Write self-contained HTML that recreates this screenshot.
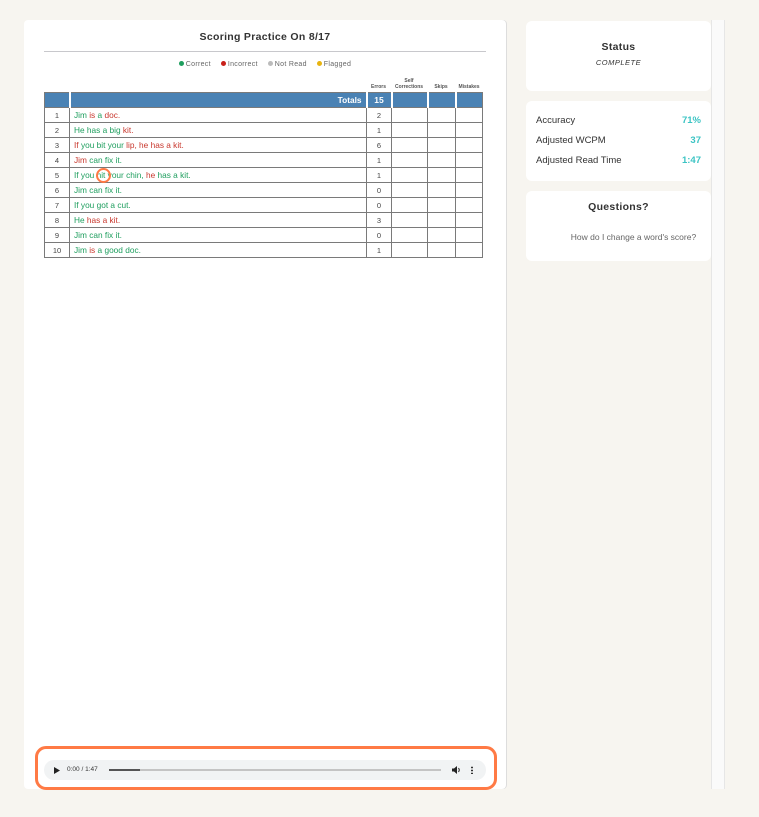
<!DOCTYPE html>
<html><head><meta charset="utf-8"><style>
*{margin:0;padding:0;box-sizing:border-box}
body{width:759px;height:817px;background:#f7f5f0;font-family:"Liberation Sans",sans-serif;position:relative;overflow:hidden;color:#333}
.card{position:absolute;background:#fff;border-radius:6px}
.main{left:24px;top:20px;width:482px;height:769px;border-radius:4px;box-shadow:1px 0 0 #ddd}
.title{position:absolute;left:0;width:482px;top:11px;text-align:center;font-weight:bold;font-size:10.5px;letter-spacing:.3px;color:#333}
.hr{position:absolute;left:20px;top:31px;width:442px;height:1px;background:#c8c8cc}
.legend{position:absolute;top:41px;left:0;width:482px;font-size:7px;color:#666;text-align:center;letter-spacing:.3px}
.legend span{margin:0 5px}
.legend i{display:inline-block;width:5px;height:5px;border-radius:50%;margin-right:2px;vertical-align:0}
.ch{position:absolute;font-size:5px;font-weight:bold;color:#555;text-align:center;line-height:6px}
table{position:absolute;left:20px;top:72px;border-collapse:collapse;table-layout:fixed;width:438px}
td{border:1px solid #7a7a7a;height:15px;font-size:8.3px;padding:0 4px;white-space:nowrap}
td.n{text-align:center;color:#444;font-size:7.5px}
tr.h td{background:#4a82b4;color:#fff;font-weight:bold;border-left:2px solid #fff;border-right:2px solid #fff;border-top:1px solid #7a7a7a;border-bottom:1px solid #7a7a7a}
tr.h td:first-child{border-left:1px solid #7a7a7a}
tr.h td:last-child{border-right:1px solid #7a7a7a}
.g{color:#1e9e5e}.r{color:#c8372d}
.side{left:526px;width:185px}
.strip{position:absolute;left:711px;top:20px;width:14px;height:769px;background:#fafafa;border-left:1px solid #e6e6e6;border-right:1px solid #e6e6e6}
.st{display:flex;justify-content:space-between;font-size:9.5px;color:#333;margin:0 10px;height:20px;align-items:center}
.st b{color:#3cc4c4}
.audio{position:absolute;left:11px;top:726px;width:462px;height:44px;border:3px solid #ff7a45;border-radius:11px}
.pill{position:absolute;left:6px;top:11px;width:442px;height:20px;border-radius:10px;background:#f1f3f4}
</style></head><body>
<div class="card main">
<div class="title">Scoring Practice On 8/17</div>
<div class="hr"></div>
<div class="legend"><span><i style="background:#1e9e5e"></i>Correct</span><span><i style="background:#c8201a"></i>Incorrect</span><span><i style="background:#bbb"></i>Not Read</span><span><i style="background:#e8b410"></i>Flagged</span></div>
<div class="ch" style="left:342px;top:64px;width:25px">Errors</div>
<div class="ch" style="left:367px;top:58px;width:36px">Self<br>Corrections</div>
<div class="ch" style="left:403px;top:64px;width:28px">Skips</div>
<div class="ch" style="left:431px;top:64px;width:28px">Mistakes</div>
<table>
<colgroup><col style="width:25px"><col style="width:297px"><col style="width:25px"><col style="width:36px"><col style="width:28px"><col style="width:27px"></colgroup>
<tr class="h"><td></td><td style="text-align:right">Totals</td><td class="n" style="color:#fff;font-size:8.5px">15</td><td></td><td></td><td></td></tr>
<tr><td class="n">1</td><td><span class="g">Jim</span> <span class="r">is</span> <span class="g">a</span> <span class="r">doc.</span></td><td class="n">2</td><td></td><td></td><td></td></tr>
<tr><td class="n">2</td><td><span class="g">He has a big</span> <span class="r">kit.</span></td><td class="n">1</td><td></td><td></td><td></td></tr>
<tr><td class="n">3</td><td><span class="r">If</span> <span class="g">you bit your</span> <span class="r">lip, he has a kit.</span></td><td class="n">6</td><td></td><td></td><td></td></tr>
<tr><td class="n">4</td><td><span class="r">Jim</span> <span class="g">can fix it.</span></td><td class="n">1</td><td></td><td></td><td></td></tr>
<tr><td class="n">5</td><td style="position:relative"><span class="g">If you hit your chin,</span> <span class="r">he</span> <span class="g">has a kit.</span><span style="position:absolute;left:26px;top:0px;width:15px;height:15px;border:2.5px solid #ff7a45;border-radius:50%"></span></td><td class="n">1</td><td></td><td></td><td></td></tr>
<tr><td class="n">6</td><td><span class="g">Jim can fix it.</span></td><td class="n">0</td><td></td><td></td><td></td></tr>
<tr><td class="n">7</td><td><span class="g">If you got a cut.</span></td><td class="n">0</td><td></td><td></td><td></td></tr>
<tr><td class="n">8</td><td><span class="g">He</span> <span class="r">has a kit.</span></td><td class="n">3</td><td></td><td></td><td></td></tr>
<tr><td class="n">9</td><td><span class="g">Jim can fix it.</span></td><td class="n">0</td><td></td><td></td><td></td></tr>
<tr><td class="n">10</td><td><span class="g">Jim</span> <span class="r">is</span> <span class="g">a good doc.</span></td><td class="n">1</td><td></td><td></td><td></td></tr>
</table>
<div class="audio"><div class="pill">
<svg style="position:absolute;left:10px;top:7px" width="6" height="7"><path d="M0 0L6 3.5L0 7Z" fill="#222"/></svg>
<div style="position:absolute;left:23px;top:6px;font-size:6.5px;color:#333">0:00 / 1:47</div>
<div style="position:absolute;left:65px;top:9px;width:332px;height:2px;background:#c4c4c4"><div style="width:31px;height:2px;background:#555"></div></div>
<svg style="position:absolute;left:408px;top:6px" width="9" height="8"><path d="M0 2.5H2L5 0V8L2 5.5H0Z" fill="#222"/><path d="M6.5 2Q8 4 6.5 6" stroke="#222" fill="none"/></svg>
<div style="position:absolute;left:427px;top:6px;width:2px;height:8px;background:radial-gradient(circle,#333 0.9px,transparent 1px) 0 0/2px 3px"></div>
</div></div>
</div>
<div class="card side" style="top:21px;height:70px;text-align:center">
<div style="margin-top:20px;font-weight:bold;font-size:10.5px;color:#333;letter-spacing:.3px">Status</div>
<div style="margin-top:5px;font-style:italic;font-size:7.5px;color:#333;letter-spacing:.5px">COMPLETE</div>
</div>
<div class="card side" style="top:101px;height:80px;padding-top:9px">
<div class="st"><span>Accuracy</span><b>71%</b></div>
<div class="st"><span>Adjusted WCPM</span><b>37</b></div>
<div class="st"><span>Adjusted Read Time</span><b>1:47</b></div>
</div>
<div class="card side" style="top:191px;height:70px;text-align:center">
<div style="margin-top:10px;font-weight:bold;font-size:10.5px;color:#333;letter-spacing:.3px">Questions?</div>
<div style="margin-top:19px;font-size:8.5px;color:#666;padding-left:30px">How do I change a word's score?</div>
</div>
<div class="strip"></div>
</body></html>
